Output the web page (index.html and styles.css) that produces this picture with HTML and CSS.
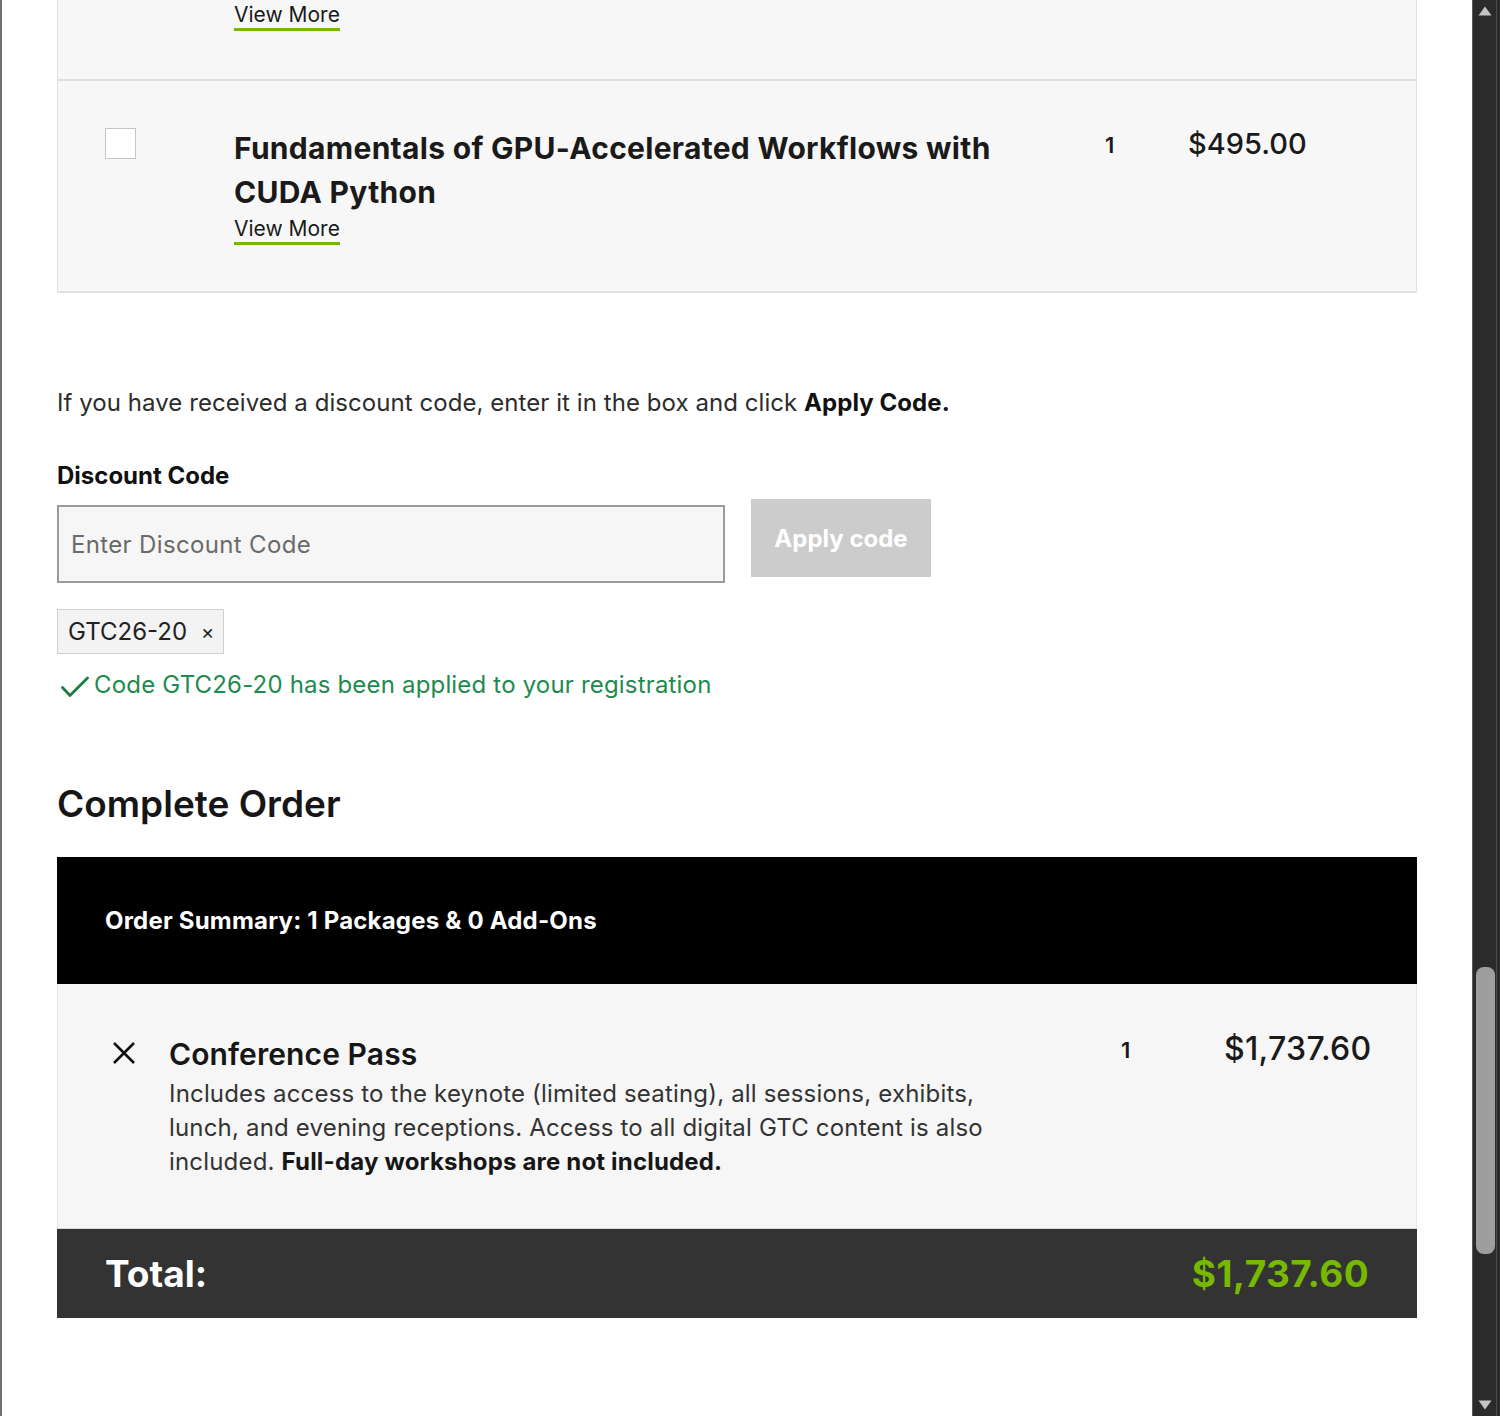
FILE: index.html
```html
<!DOCTYPE html>
<html lang="en">
<head>
<meta charset="utf-8">
<title>Registration</title>
<link rel="stylesheet" href="styles.css">
</head>
<body>
<div class="window">
  <div class="edge"></div>
  <main class="page">
    <section class="products">
      <div class="prow prow-partial">
        <div></div>
        <div class="pinfo"><a class="view-more" href="#">View More</a></div>
      </div>
      <div class="prow">
        <div class="pcheck"><span class="checkbox"></span></div>
        <div class="pinfo">
          <h3 class="ptitle">Fundamentals of GPU-Accelerated Workflows with CUDA Python</h3>
          <a class="view-more" href="#">View More</a>
        </div>
        <div class="pqty">1</div>
        <div class="pprice">$495.00</div>
      </div>
    </section>

    <section class="discount">
      <p class="discount-intro">If you have received a discount code, enter it in the box and click <strong>Apply Code.</strong></p>
      <label class="discount-label" for="code">Discount Code</label>
      <div class="discount-form">
        <input id="code" class="discount-input" type="text" placeholder="Enter Discount Code">
        <button class="apply-btn" type="button">Apply code</button>
      </div>
      <div class="chip"><span class="chip-text">GTC26-20</span><span class="chip-x">×</span></div>
      <div class="success">
        <svg class="success-icon" width="28" height="22" viewBox="0 0 28 22"><polyline points="1.5,11.5 9,19.5 26.5,2" fill="none" stroke="#1d7d46" stroke-width="2.8" stroke-linecap="round" stroke-linejoin="round"/></svg>
        <span>Code GTC26-20 has been applied to your registration</span>
      </div>
    </section>

    <section class="order">
      <h2 class="order-title">Complete Order</h2>
      <div class="order-head">Order Summary: 1 Packages &amp; 0 Add-Ons</div>
      <div class="order-item">
        <div class="item-remove">
          <svg width="24" height="24" viewBox="0 0 24 24"><path d="M2 2 L22 22 M22 2 L2 22" stroke="#111" stroke-width="2.6" fill="none"/></svg>
        </div>
        <div class="item-info">
          <h3 class="item-title">Conference Pass</h3>
          <p class="item-desc"><span>Includes access to the keynote (limited seating), all sessions, exhibits, lunch, and evening receptions. Access to all digital GTC content is also</span> <span>included.</span> <strong>Full-day workshops are not included.</strong></p>
        </div>
        <div class="item-qty">1</div>
        <div class="item-price">$1,737.60</div>
      </div>
      <div class="order-total">
        <span class="total-label">Total:</span>
        <span class="total-amount">$1,737.60</span>
      </div>
    </section>
  </main>
  <div class="scrollbar">
    <div class="sb-arrow">
      <svg width="14" height="10" viewBox="0 0 14 10"><path d="M7 0.5 L13.5 9.5 L0.5 9.5 Z" fill="#c4c4c4"/></svg>
    </div>
    <div class="sb-track"><div class="sb-thumb"></div></div>
    <div class="sb-arrow sb-arrow-down">
      <svg width="14" height="10" viewBox="0 0 14 10"><path d="M0.5 0.5 L13.5 0.5 L7 9.5 Z" fill="#c4c4c4"/></svg>
    </div>
  </div>
</div>
</body>
</html>
```
FILE: styles.css
```css
* { box-sizing: border-box; }
html, body { margin: 0; padding: 0; }
body {
  background: #fff;
  font-family: Inter, "Noto Sans", sans-serif;
  color: #1a1a1a;
  height: 1416px;
  overflow: hidden;
}
.window { display: flex; height: 1416px; }
.edge { width: 2px; flex: none; background: #707070; }
.page { flex: 1; padding: 0 55px; min-width: 0; }

/* products card */
.products {
  background: #f7f7f7;
  border-left: 1px solid #e2e2e2;
  border-right: 1px solid #e2e2e2;
  border-bottom: 2px solid #e0e0e0;
}
.prow {
  display: grid;
  grid-template-columns: 129px 871px 83px 1fr;
  padding: 45px 0 46px 47px;
  border-top: 2px solid #dedede;
}
.prow-partial { padding-top: 2px; padding-bottom: 48px; border-top: none; }
.pcheck { padding-top: 2px; }
.checkbox {
  display: block; width: 31px; height: 31px;
  background: #fff; border: 1px solid #c4c4c4;
}
.ptitle {
  margin: 0; max-width: 800px;
  font-size: 30px; line-height: 44px; font-weight: 700; color: #1a1a1a;
  letter-spacing: 0.3px;
}
.view-more {
  display: inline-block; margin-top: 2px;
  font-size: 21px; line-height: 26px; color: #1a1a1a;
  text-decoration: none; border-bottom: 3px solid #76b900;
}
.prow-partial .view-more { margin-top: 0; }
.pqty { font-size: 22px; font-weight: 600; line-height: 38px; }
.pprice { font-size: 29px; font-weight: 500; line-height: 36px; }

/* discount */
.discount { padding-top: 92px; }
.discount-intro { margin: 0; font-size: 24px; line-height: 36px; color: #2c2c2c; letter-spacing: 0.06px; }
.discount-intro strong { font-weight: 700; color: #111; }
.discount-label {
  display: block; margin-top: 37px;
  font-size: 24px; line-height: 36px; font-weight: 700; color: #111;
}
.discount-form { display: flex; align-items: flex-start; gap: 26px; margin-top: 5px; }
.discount-input {
  width: 668px; height: 78px; margin-top: 6px;
  background: #f6f6f6; border: 2px solid #9c9c9c; border-radius: 0;
  padding: 0 12px; font-family: inherit; font-size: 24px; color: #222; outline: none;
  letter-spacing: 0.35px;
}
.discount-input::placeholder { color: #6a6a6a; }
.apply-btn {
  width: 180px; height: 78px; border: none; border-radius: 0;
  background: #cccccc; color: #fff;
  font-family: inherit; font-size: 24px; font-weight: 700;
}
.chip {
  display: inline-flex; align-items: center; gap: 14px;
  height: 45px; margin-top: 26px; padding: 0 9px 0 10px;
  background: #f3f3f3; border: 1px solid #d0d0d0;
  font-size: 24px; color: #222;
}
.chip-x { font-size: 20px; line-height: 1; color: #222; }
.success {
  display: flex; align-items: center; gap: 5px;
  margin-top: 13px; padding-left: 4px;
  font-size: 24px; line-height: 36px; color: #218a4e;
  letter-spacing: 0.18px;
}
.success-icon { flex: none; margin-top: 4px; }

/* order */
.order-title {
  margin: 79px 0 0; font-size: 37px; line-height: 44px; font-weight: 600; color: #161616;
}
.order-head {
  display: flex; align-items: center;
  height: 127px; margin-top: 31px; padding-left: 48px;
  background: #000; color: #fff;
  font-size: 24px; line-height: 36px; font-weight: 700;
  letter-spacing: 0.2px;
}
.order-item {
  display: grid;
  grid-template-columns: 65px 950px 103px 146px;
  padding: 50px 48px 49px 48px;
  background: #f6f6f6;
  border-left: 1px solid #e6e6e6;
  border-right: 1px solid #e6e6e6;
}
.item-remove { padding: 7px 0 0 6px; }
.item-remove svg { display: block; }
.item-info { margin-left: -2px; }
.item-title { margin: 0; font-size: 30px; line-height: 40px; font-weight: 600; color: #161616; letter-spacing: 0.1px; }
.item-desc {
  margin: 3px 0 0; max-width: 840px;
  font-size: 24px; line-height: 34px; color: #333;
  letter-spacing: 0.18px;
}
.item-desc strong { font-weight: 700; color: #161616; }
.item-qty { font-size: 22px; font-weight: 600; line-height: 32px; }
.item-price { text-align: right; font-size: 32px; font-weight: 500; line-height: 30px; white-space: nowrap; letter-spacing: 0.3px; }
.order-total {
  display: flex; align-items: center; justify-content: space-between;
  height: 90px; padding: 0 48px;
  background: #333; border-top: 1px solid #d8d8d8;
}
.total-label { font-size: 37px; font-weight: 700; color: #fff; }
.total-amount { font-size: 37px; font-weight: 700; color: #76b900; letter-spacing: 0.4px; }

/* scrollbar */
.scrollbar {
  width: 28px; flex: none;
  display: flex; flex-direction: column;
  background: #2b2b2b;
  border-left: 1px solid #5a5a5a;
  box-shadow: inset -3px 0 0 #2b2b2b, inset -4px 0 0 #4a4a4a;
}
.sb-arrow { height: 22px; display: flex; justify-content: center; align-items: center; padding-right: 3px; }
.sb-arrow svg { display: block; }
.sb-track { flex: 1; padding: 0 5px 0 3px; }
.sb-thumb {
  margin-top: 945px; height: 287px;
  background: #9e9e9e; border-radius: 8px;
}
```
